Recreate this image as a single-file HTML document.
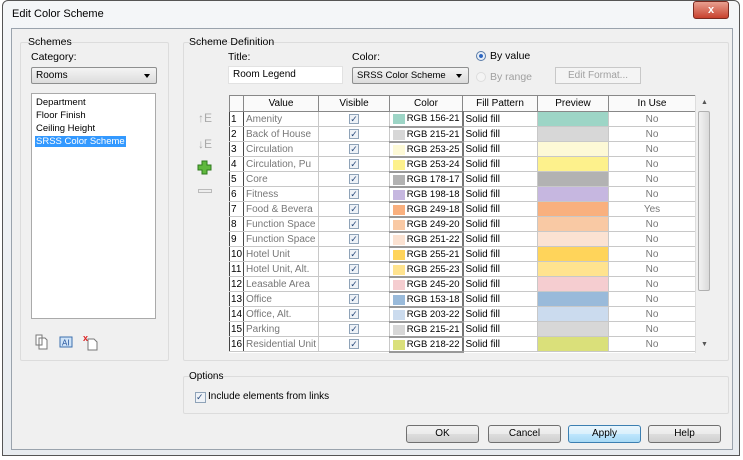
<!DOCTYPE html>
<html><head><style>
*{box-sizing:border-box;margin:0;padding:0}
body{width:743px;height:460px;overflow:hidden;background:#fff;font-family:"Liberation Sans",sans-serif;font-size:10.5px;color:#000;position:relative}
.a{position:absolute}
.frame{left:2px;top:0;width:738px;height:456px;background:linear-gradient(#f4f6f8,#e8ecf0);border:1px solid #555;border-radius:6px 6px 0 0}
.client{left:11px;top:28px;width:722px;height:422px;background:#f0f0f0;border:1px solid #9aa3ad}
.grp{border:1px solid #dcdcdc;border-radius:2px}
.combo{background:linear-gradient(#f4f4f4,#dcdcdc);border:1px solid #8e8f8f;border-radius:2px;padding:2px 4px;font-size:10px}
.combo:after{content:"";position:absolute;right:6px;top:6px;border:3.5px solid transparent;border-top:4px solid #000}
.btn{background:linear-gradient(#f2f2f2,#ebebeb 50%,#dddddd 51%,#cfcfcf);border:1px solid #707070;border-radius:3px;text-align:center;line-height:16px;font-size:10px}
table{border-collapse:collapse;font-size:10px}
td{border:1px solid #c8c8c8;height:15px;padding:0 2px;white-space:nowrap;overflow:hidden;color:#777}
th{border:1px solid #888;height:16px;font-weight:normal;background:#fafafa;font-size:10px}
td.n{color:#000;border-left:1px solid #444;border-right:1px solid #444;padding:0 1px}
td.c{color:#000;text-align:right;padding:0 2px;position:relative;border-bottom:2px solid #999;border-right:2px solid #777;font-size:9.5px}
td.c span{position:absolute;left:3px;top:2px;width:12px;height:10px}
td.f{color:#000}
td.cb{text-align:center}
.chk{display:inline-block;width:10px;height:10px;border:1px solid #8fa3b8;background:#eef2f7;font-size:9px;line-height:9px;color:#2a4b7c;vertical-align:middle}
td.u{text-align:center}
</style></head><body>
<div class="a frame"></div>
<div class="a" style="left:12px;top:8px;font-size:11px">Edit Color Scheme</div>
<div class="a" style="left:693px;top:1px;width:36px;height:18px;background:linear-gradient(#e8a090,#c8412e);border:1px solid #7a2a20;border-radius:3px;color:#fff;text-align:center;font-weight:bold;font-size:11px;line-height:16px">x</div>
<div class="a client"></div>

<div class="a grp" style="left:20px;top:42px;width:149px;height:319px"></div>
<div class="a" style="left:28px;top:36px">Schemes</div>
<div class="a" style="left:31px;top:51px">Category:</div>
<div class="a combo" style="left:31px;top:67px;width:126px;height:17px">Rooms</div>
<div class="a" style="left:31px;top:93px;width:125px;height:226px;background:#fff;border:1px solid #aaa;font-size:9.5px;padding:2px 4px;line-height:13px">Department<br>Floor Finish<br>Ceiling Height<br><span style="background:#3399ff;color:#fff;padding:0 1px;margin-left:-1px">SRSS Color Scheme</span></div>
<svg class="a" style="left:34px;top:333px" width="100" height="18">
<path d="M2 2h6l0 10h-6z M5 5h6l2 2v9h-8z" fill="#fff" stroke="#777"/>
<rect x="26" y="4" width="12" height="10" fill="#cfe3f7" stroke="#3d6fae"/><text x="28" y="12.5" font-size="8" fill="#1f4f9a" font-family="Liberation Sans">AI</text>
<path d="M54 6h6l3 3v8h-9z" fill="#fff" stroke="#777"/><text x="49" y="8" font-size="9" fill="#d22" font-weight="bold" font-family="Liberation Sans">x</text>
</svg>

<div class="a grp" style="left:183px;top:42px;width:546px;height:319px"></div>
<div class="a" style="left:189px;top:36px">Scheme Definition</div>
<div class="a" style="left:228px;top:51px">Title:</div>
<div class="a" style="left:228px;top:66px;width:115px;height:18px;background:#fff;border:1px solid #e2e2e2;padding:2px 4px;font-size:10px">Room Legend</div>
<div class="a" style="left:352px;top:51px">Color:</div>
<div class="a combo" style="left:352px;top:67px;width:117px;height:17px;font-size:9.5px">SRSS Color Scheme</div>
<div class="a" style="left:476px;top:51px;width:10px;height:10px;border-radius:50%;border:1px solid #5a7ca8;background:radial-gradient(#2a64c0 30%,#e8eef6 40%)"></div>
<div class="a" style="left:490px;top:50px">By value</div>
<div class="a" style="left:476px;top:72px;width:10px;height:10px;border-radius:50%;border:1px solid #ddd;background:#f4f4f4"></div>
<div class="a" style="left:490px;top:71px;color:#a0a0a0">By range</div>
<div class="a" style="left:555px;top:67px;width:86px;height:17px;border:1px solid #c8c8c8;background:#f4f4f4;color:#a0a0a0;text-align:center;line-height:15px;font-size:10px">Edit Format...</div>

<div class="a" style="left:198px;top:111px;color:#aaa;font-size:12px">↑E</div>
<div class="a" style="left:198px;top:137px;color:#aaa;font-size:12px">↓E</div>
<svg class="a" style="left:197px;top:160px" width="16" height="16"><path d="M5 1h5v4h4v5h-4v4h-5v-4h-4v-5h4z" fill="#5fb83d" stroke="#2f7a1e"/></svg>
<div class="a" style="left:198px;top:189px;width:14px;height:4px;border:1px solid #bbb;background:#eee"></div>

<div class="a" style="left:229px;top:95px;width:483px;height:258px;background:#fff;overflow:hidden">
<table style="width:466px;table-layout:fixed">
<col style="width:14px"><col style="width:75px"><col style="width:71px"><col style="width:73px"><col style="width:75px"><col style="width:71px"><col style="width:87px">
<tr><th></th><th>Value</th><th>Visible</th><th>Color</th><th>Fill Pattern</th><th>Preview</th><th>In Use</th></tr>
<tr><td class="n">1</td><td>Amenity</td><td class="cb"><span class="chk">✓</span></td><td class="c"><span style="background:#9dd5c6"></span>RGB 156-21</td><td class="f">Solid fill</td><td style="background:#9dd5c6"></td><td class="u">No</td></tr>
<tr><td class="n">2</td><td>Back of House</td><td class="cb"><span class="chk">✓</span></td><td class="c"><span style="background:#d7d7d7"></span>RGB 215-21</td><td class="f">Solid fill</td><td style="background:#d7d7d7"></td><td class="u">No</td></tr>
<tr><td class="n">3</td><td>Circulation</td><td class="cb"><span class="chk">✓</span></td><td class="c"><span style="background:#fdf9d6"></span>RGB 253-25</td><td class="f">Solid fill</td><td style="background:#fdf9d6"></td><td class="u">No</td></tr>
<tr><td class="n">4</td><td>Circulation, Pu</td><td class="cb"><span class="chk">✓</span></td><td class="c"><span style="background:#fdf18c"></span>RGB 253-24</td><td class="f">Solid fill</td><td style="background:#fdf18c"></td><td class="u">No</td></tr>
<tr><td class="n">5</td><td>Core</td><td class="cb"><span class="chk">✓</span></td><td class="c"><span style="background:#b2b2b2"></span>RGB 178-17</td><td class="f">Solid fill</td><td style="background:#b2b2b2"></td><td class="u">No</td></tr>
<tr><td class="n">6</td><td>Fitness</td><td class="cb"><span class="chk">✓</span></td><td class="c"><span style="background:#c6b7e0"></span>RGB 198-18</td><td class="f">Solid fill</td><td style="background:#c6b7e0"></td><td class="u">No</td></tr>
<tr><td class="n">7</td><td>Food &amp; Bevera</td><td class="cb"><span class="chk">✓</span></td><td class="c"><span style="background:#f9b07e"></span>RGB 249-18</td><td class="f">Solid fill</td><td style="background:#f9b07e"></td><td class="u">Yes</td></tr>
<tr><td class="n">8</td><td>Function Space</td><td class="cb"><span class="chk">✓</span></td><td class="c"><span style="background:#f9c9a4"></span>RGB 249-20</td><td class="f">Solid fill</td><td style="background:#f9c9a4"></td><td class="u">No</td></tr>
<tr><td class="n">9</td><td>Function Space</td><td class="cb"><span class="chk">✓</span></td><td class="c"><span style="background:#fbe2d2"></span>RGB 251-22</td><td class="f">Solid fill</td><td style="background:#fbe2d2"></td><td class="u">No</td></tr>
<tr><td class="n">10</td><td>Hotel Unit</td><td class="cb"><span class="chk">✓</span></td><td class="c"><span style="background:#ffd45a"></span>RGB 255-21</td><td class="f">Solid fill</td><td style="background:#ffd45a"></td><td class="u">No</td></tr>
<tr><td class="n">11</td><td>Hotel Unit, Alt.</td><td class="cb"><span class="chk">✓</span></td><td class="c"><span style="background:#ffe38f"></span>RGB 255-23</td><td class="f">Solid fill</td><td style="background:#ffe38f"></td><td class="u">No</td></tr>
<tr><td class="n">12</td><td>Leasable Area</td><td class="cb"><span class="chk">✓</span></td><td class="c"><span style="background:#f5cdd0"></span>RGB 245-20</td><td class="f">Solid fill</td><td style="background:#f5cdd0"></td><td class="u">No</td></tr>
<tr><td class="n">13</td><td>Office</td><td class="cb"><span class="chk">✓</span></td><td class="c"><span style="background:#99bada"></span>RGB 153-18</td><td class="f">Solid fill</td><td style="background:#99bada"></td><td class="u">No</td></tr>
<tr><td class="n">14</td><td>Office, Alt.</td><td class="cb"><span class="chk">✓</span></td><td class="c"><span style="background:#cbdbee"></span>RGB 203-22</td><td class="f">Solid fill</td><td style="background:#cbdbee"></td><td class="u">No</td></tr>
<tr><td class="n">15</td><td>Parking</td><td class="cb"><span class="chk">✓</span></td><td class="c"><span style="background:#d7d7d7"></span>RGB 215-21</td><td class="f">Solid fill</td><td style="background:#d7d7d7"></td><td class="u">No</td></tr>
<tr><td class="n">16</td><td>Residential Unit</td><td class="cb"><span class="chk">✓</span></td><td class="c"><span style="background:#dae07a"></span>RGB 218-22</td><td class="f">Solid fill</td><td style="background:#dae07a"></td><td class="u">No</td></tr>
</table>
<div class="a" style="left:466px;top:0;width:17px;height:258px;background:#f0f0f0;border-left:1px solid #ddd">
<div class="a" style="left:5px;top:4px;font-size:7px;color:#555">▲</div>
<div class="a" style="left:2px;top:16px;width:12px;height:180px;border:1px solid #b0b0b0;border-radius:2px;background:linear-gradient(90deg,#f2f2f2,#dadada)"></div>
<div class="a" style="left:5px;top:246px;font-size:7px;color:#555">▼</div>
</div>
</div>

<div class="a grp" style="left:183px;top:376px;width:546px;height:38px"></div>
<div class="a" style="left:189px;top:371px;font-size:10px">Options</div>
<div class="a chk" style="left:195px;top:392px;width:11px;height:11px">✓</div>
<div class="a" style="left:208px;top:391px;font-size:10px">Include elements from links</div>

<div class="a btn" style="left:406px;top:425px;width:73px;height:18px">OK</div>
<div class="a btn" style="left:488px;top:425px;width:73px;height:18px">Cancel</div>
<div class="a btn" style="left:568px;top:425px;width:73px;height:18px;border-color:#3c7fb1;background:linear-gradient(#eaf6fd,#d9f0fc 50%,#bee6fd 51%,#a7d9f5)">Apply</div>
<div class="a btn" style="left:648px;top:425px;width:73px;height:18px">Help</div>
</body></html>
